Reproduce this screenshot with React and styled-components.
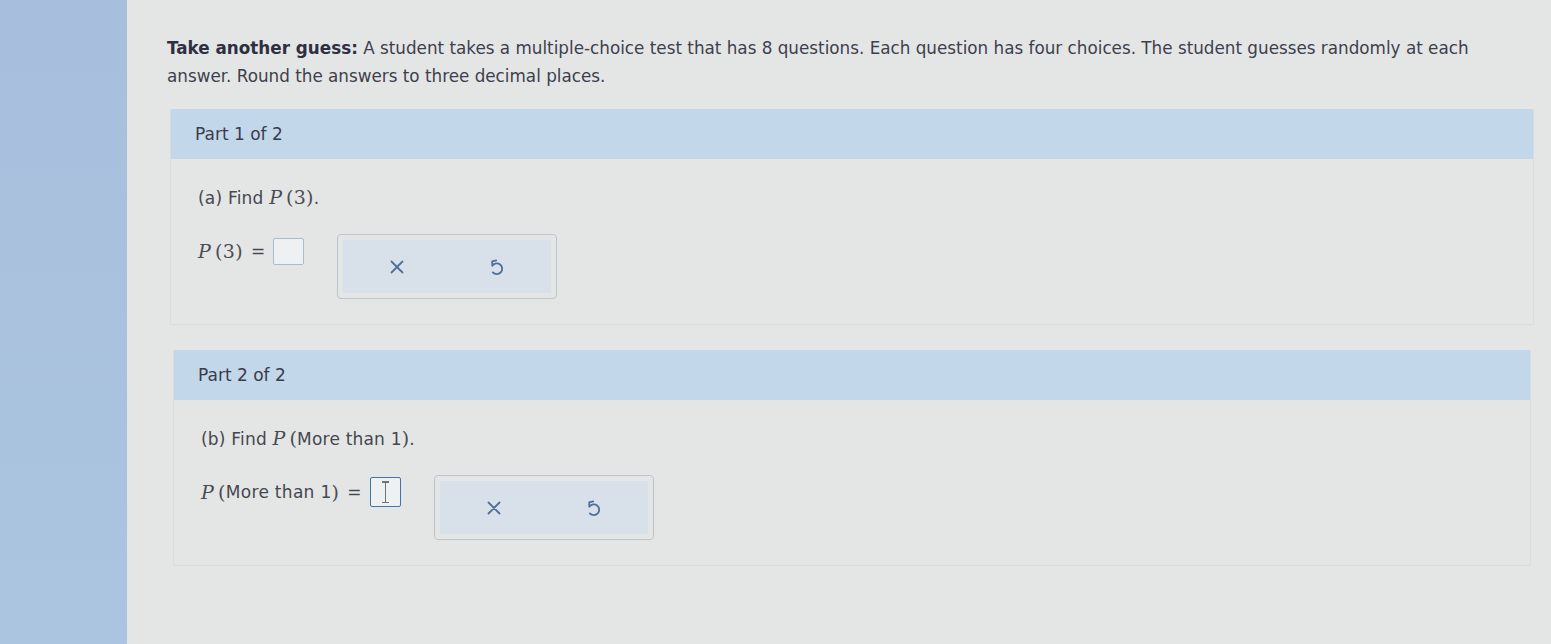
import React from "react";
import styled, { createGlobalStyle } from "styled-components";

const GlobalStyle = createGlobalStyle`
  html, body {
    margin: 0;
    padding: 0;
    background: #e4e6e6;
  }
  body {
    font-family: "DejaVu Sans", Verdana, sans-serif;
    color: #3b3d48;
  }
`;

const Page = styled.div`
  display: flex;
  min-height: 644px;
  width: 1551px;
  overflow: hidden;
`;

const Sidebar = styled.aside`
  width: 127px;
  flex-shrink: 0;
  background: linear-gradient(180deg, #a7bfdc 0%, #abc4df 100%);
`;

const Main = styled.main`
  flex: 1;
  padding: 34px 14px 0 40px;
  display: flex;
  flex-direction: column;
`;

const Prompt = styled.p`
  margin: 0;
  font-size: 16.8px;
  line-height: 28px;
  color: #3d3f4c;
  max-width: 1370px;

  strong {
    color: #2e2f40;
  }
`;

const Part = styled.section`
  border: 1px solid #dadddd;
  border-top: none;
  margin-top: ${(p) => p.$top}px;
  margin-left: ${(p) => p.$inset}px;
  margin-right: ${(p) => p.$inset}px;
`;

const PartHeader = styled.div`
  height: 50px;
  display: flex;
  align-items: center;
  padding-left: 24px;
  background: #c3d7eb;
  font-size: 17px;
  color: #3a3c48;
`;

const PartBody = styled.div`
  padding: 27px 27px 25px;
  display: flex;
  flex-direction: column;
  gap: 25px;
`;

const Question = styled.div`
  font-size: 17px;
  line-height: 22px;
  letter-spacing: 0.2px;
  color: #45474f;
  white-space: nowrap;
`;

const MathP = styled.span`
  font-family: "DejaVu Serif", "Liberation Serif", serif;
  font-style: italic;
  font-size: 19px;
  color: #4a4c55;
`;

const Paren = styled.span`
  font-family: "DejaVu Serif", "Liberation Serif", serif;
  font-size: 19px;
  color: #4a4c55;
  margin-left: ${(p) => (p.$tight ? 0 : 4)}px;
`;

const AnswerRow = styled.div`
  display: flex;
  align-items: flex-start;
`;

const Equation = styled.div`
  display: flex;
  align-items: center;
  margin-top: 2px;
  height: 30px;
  font-size: 17px;
  letter-spacing: 0.3px;
  color: #45474f;
  white-space: nowrap;
`;

const Equals = styled.span`
  margin: 0 8px 0 8px;
  font-size: 17px;
`;

const Blank = styled.span`
  width: 29px;
  height: ${(p) => (p.$focused ? 28 : 25)}px;
  border: 1.5px solid ${(p) => (p.$focused ? "#3f74ad" : "#a9bccb")};
  border-radius: 2px;
  background: #eef1f1;
  display: inline-flex;
  align-items: center;
  justify-content: center;
`;

const Caret = styled.span`
  width: 1.5px;
  height: 22px;
  background: #6f7378;
  position: relative;

  &::before,
  &::after {
    content: "";
    position: absolute;
    left: -3px;
    width: 7px;
    height: 1.5px;
    background: #6f7378;
  }
  &::before {
    top: 0;
  }
  &::after {
    bottom: 0;
  }
`;

const Tools = styled.div`
  margin-left: 33px;
  width: 220px;
  height: 65px;
  box-sizing: border-box;
  border: 1.5px solid #b9c6d2;
  border-radius: 4px;
  padding: 5px;
  display: flex;
`;

const ToolFill = styled.div`
  flex: 1;
  background: #d8e1e9;
  display: grid;
  grid-template-columns: 1fr 1fr;
  align-items: center;
  justify-items: center;
  padding: 0 4px;
`;

const ToolButton = styled.button`
  border: none;
  background: none;
  padding: 0;
  width: 24px;
  height: 24px;
  display: flex;
  align-items: center;
  justify-content: center;
  cursor: pointer;
`;

const ClearIcon = () => (
  <svg width="16" height="16" viewBox="0 0 16 16" fill="none">
    <path d="M2.5 2.5 L13.5 13.5 M13.5 2.5 L2.5 13.5" stroke="#4f6f98" strokeWidth="1.8" strokeLinecap="round" />
  </svg>
);

// counter-clockwise arrow, drawn like the "5"-shaped undo glyph
const UndoIcon = () => (
  <svg width="18" height="20" viewBox="0 0 18 20" fill="none">
    <path
      d="M8.2 3.4 L4.2 4.4 L4.3 8.8 A5.4 5.4 0 1 1 4.8 15.4"
      stroke="#4f6f98"
      strokeWidth="1.8"
      strokeLinecap="round"
      strokeLinejoin="round"
    />
  </svg>
);

const ToolBox = () => (
  <Tools>
    <ToolFill>
      <ToolButton aria-label="clear">
        <ClearIcon />
      </ToolButton>
      <ToolButton aria-label="undo">
        <UndoIcon />
      </ToolButton>
    </ToolFill>
  </Tools>
);

export default function App() {
  return (
    <>
      <GlobalStyle />
      <Page>
        <Sidebar />
        <Main>
          <Prompt>
            <strong>Take another guess:</strong> A student takes a multiple-choice test that has 8
            questions. Each question has four choices. The student guesses randomly at each
            answer. Round the answers to three decimal places.
          </Prompt>

          <Part $top={19} $inset={3}>
            <PartHeader>Part 1 of 2</PartHeader>
            <PartBody>
              <Question>
                (a) Find <MathP>P</MathP>
                <Paren>(3)</Paren>.
              </Question>
              <AnswerRow>
                <Equation>
                  <MathP>P</MathP>
                  <Paren>(3)</Paren>
                  <Equals>=</Equals>
                  <Blank />
                </Equation>
                <ToolBox />
              </AnswerRow>
            </PartBody>
          </Part>

          <Part $top={25} $inset={6}>
            <PartHeader>Part 2 of 2</PartHeader>
            <PartBody>
              <Question>
                (b) Find <MathP>P</MathP>
                <Paren>(</Paren>More than 1<Paren $tight>)</Paren>.
              </Question>
              <AnswerRow>
                <Equation>
                  <MathP>P</MathP>
                  <Paren>(</Paren>More than 1<Paren $tight>)</Paren>
                  <Equals>=</Equals>
                  <Blank $focused>
                    <Caret />
                  </Blank>
                </Equation>
                <ToolBox />
              </AnswerRow>
            </PartBody>
          </Part>
        </Main>
      </Page>
    </>
  );
}
